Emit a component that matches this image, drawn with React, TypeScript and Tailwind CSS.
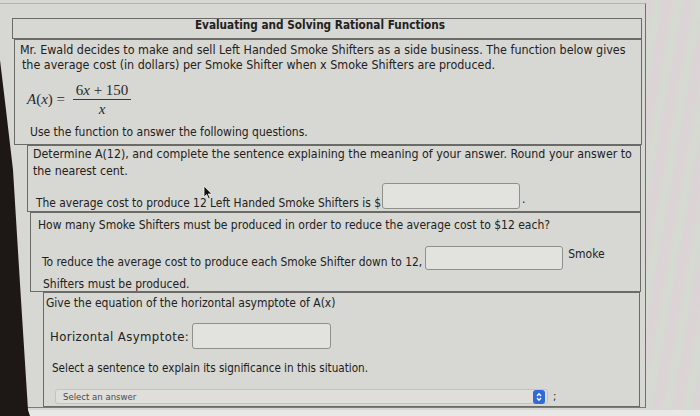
import React from 'react';

// Photographed worksheet: "Evaluating and Solving Rational Functions".
// Nested boxes step inward on the left to follow the photo's keystone.

const body = "font-['DejaVu_Sans_Condensed','DejaVu_Sans',sans-serif] text-[12px] leading-[15px] text-[#222220]";
const math = "font-['Liberation_Serif','DejaVu_Serif',serif] text-[15px] text-[#2a2a28]";

function Field({ w, h }: { w: number; h: number }) {
  return (
    <span
      className="inline-block shrink-0 rounded-[3px] border border-[#8f8f8c] bg-[#e2e2de]"
      style={{ width: w, height: h }}
    />
  );
}

function Stepper() {
  return (
    <span className="flex h-[14px] w-[12px] items-center justify-center rounded-[3px] bg-[#2f6ad8]">
      <svg width="6" height="10" viewBox="0 0 6 10" fill="none" stroke="#ffffff" strokeWidth="1.3">
        <path d="M1 4 L3 1.8 L5 4" />
        <path d="M1 6 L3 8.2 L5 6" />
      </svg>
    </span>
  );
}

function Pointer() {
  return (
    <svg className="absolute left-[203px] top-[185px]" width="10" height="15" viewBox="0 0 10 15">
      <path d="M1 1 L1 12 L3.6 9.6 L5.6 14 L7.2 13.3 L5.3 9 L8.8 9 Z" fill="#111" stroke="#f2f2f2" strokeWidth="0.8" />
    </svg>
  );
}

export default function App() {
  return (
    <div className="relative flex h-[416px] w-[700px] flex-col overflow-hidden bg-[#d7d7d3]">
      <div className="flex h-[410px]">
        {/* worksheet frame */}
        <div className={`mt-[3px] flex h-[405px] w-[646px] shrink-0 flex-col border-t border-r border-b border-t-[#b3b3af] border-r-[#6f6f6c] border-b-[#7a7a77] ${body}`}>
          {/* title */}
          <div className="ml-[12px] mr-[3px] mt-[14px] flex h-[21px] items-center justify-center border border-[#6a6a67] pr-[14px]">
            <span className="-mt-[6px] text-[11.7px] font-bold">Evaluating and Solving Rational Functions</span>
          </div>

          {/* intro */}
          <div className="ml-[14px] mr-[3px] h-[106px] border border-[#6a6a67] pt-[2px]">
            <p className="ml-[5px] text-[12.4px]">
              Mr. Ewald decides to make and sell Left Handed Smoke Shifters as a side business. The function below gives
            </p>
            <p className="ml-[7px] text-[12.4px]">
              the average cost (in dollars) per Smoke Shifter when x Smoke Shifters are produced.
            </p>
            <div className={`ml-[12px] mt-[10px] flex items-center ${math}`}>
              <span>
                <i>A</i>(<i>x</i>) =
              </span>
              <span className="ml-[8px] flex flex-col items-center">
                <span className="px-[2px] leading-[16px]">
                  6<i>x</i> + 150
                </span>
                <span className="my-[1px] h-px w-[58px] bg-[#3a3a38]" />
                <span className="leading-[16px]">
                  <i>x</i>
                </span>
              </span>
            </div>
            <p className="ml-[15px] mt-[8px]">Use the function to answer the following questions.</p>
          </div>

          {/* part 1 */}
          <div className="ml-[27px] mr-[4px] h-[67px] border border-[#6a6a67]">
            <p className="ml-[5px] text-[12.3px] leading-[17px]">
              Determine A(12), and complete the sentence explaining the meaning of your answer. Round your answer to
            </p>
            <p className="ml-[5px] text-[12.3px] leading-[17px]">the nearest cent.</p>
            <div className="ml-[8px] mt-[3px] flex items-end">
              <span className="mb-[2px] text-[11.9px]">The average cost to produce 12 Left Handed Smoke Shifters is $</span>
              <span className="ml-[1px]">
                <Field w={138} h={26} />
              </span>
              <span className="mb-[6px] ml-[2px]">.</span>
            </div>
          </div>

          {/* part 2 */}
          <div className="ml-[30px] mr-[4px] h-[80px] border border-[#6a6a67] pt-[4px]">
            <p className="ml-[7px] leading-[17px]">
              How many Smoke Shifters must be produced in order to reduce the average cost to $12 each?
            </p>
            <div className="ml-[11px] mt-[12px] flex items-start">
              <span className="mt-[9px] text-[11.9px]">To reduce the average cost to produce each Smoke Shifter down to 12,</span>
              <span className="ml-[3px]">
                <Field w={138} h={24} />
              </span>
              <span className="ml-[5px] mt-[1px]">Smoke</span>
            </div>
            <p className="ml-[12px] mt-[3px]">Shifters must be produced.</p>
          </div>

          {/* part 3 */}
          <div className="ml-[43px] mr-[5px] flex-1 border border-[#6a6a67] pt-[2px]">
            <p className="ml-[2px] leading-[17px]">Give the equation of the horizontal asymptote of A(x)</p>
            <div className="ml-[6px] mt-[11px] flex items-center">
              <span className="text-[13px] tracking-[0.4px]">Horizontal Asymptote:</span>
              <span className="ml-[3px] flex">
                <Field w={139} h={26} />
              </span>
            </div>
            <p className="ml-[8px] mt-[12px] text-[11.6px] text-[#1c1c1a]">
              Select a sentence to explain its significance in this situation.
            </p>
            <div className="ml-[11px] mt-[13px] flex items-center">
              <div className="flex h-[15px] w-[493px] items-center justify-between rounded-[3px] border border-[#c3c3bf] bg-[#dfdedb] pl-[7px] pr-[2px]">
                <span className="text-[9.5px] leading-[13px] text-[#4a4a48]">Select an answer</span>
                <Stepper />
              </div>
              <span className="ml-[5px] text-[11px]">;</span>
            </div>
          </div>
        </div>

        {/* screen beyond the frame */}
        <div className="flex-1 bg-[repeating-linear-gradient(100deg,#dcd3d6_0px,#dad6d4_7px,#d3dcd1_12px,#dcd3d6_20px)]" />
      </div>
      <div className="h-[6px] bg-[#e8e8e6]" />

      {/* dark bezel edge at the left of the photo */}
      <svg className="absolute left-0 top-0" width="40" height="416" viewBox="0 0 40 416">
        <polygon points="0,60 6,110 13,170 21,300 28,410 30,416 0,416" fill="#1d1816" />
      </svg>

      <Pointer />
    </div>
  );
}
